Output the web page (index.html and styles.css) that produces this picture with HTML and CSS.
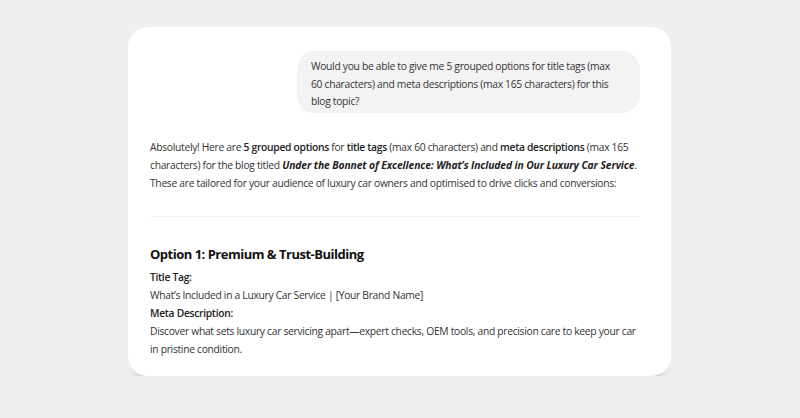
FILE: index.html
```html
<!DOCTYPE html>
<html>
<head>
<meta charset="utf-8">
<link rel="stylesheet" href="styles.css">
</head>
<body>
<div class="card">
  <div class="user-row">
    <div class="bubble">Would you be able to give me 5 grouped options for title tags (max 60 characters) and meta descriptions (max 165 characters) for this blog topic?</div>
  </div>
  <p class="intro">Absolutely! Here are <b>5 grouped options</b> for <b>title tags</b> (max 60 characters) and <b>meta descriptions</b> (max 165 characters) for the blog titled <b class="title-ref"><i>Under the Bonnet of Excellence: What’s Included in Our Luxury Car Service</i></b>. These are tailored for your audience of luxury car owners and optimised to drive clicks and conversions:</p>
  <hr class="divider">
  <h3 class="option">Option 1: Premium &amp; Trust-Building</h3>
  <div class="field">
    <b>Title Tag:</b><br>
    What’s Included in a Luxury Car Service | [Your Brand Name]<br>
    <b>Meta Description:</b><br>
    Discover what sets luxury car servicing apart—expert checks, OEM tools, and precision care to keep your car in pristine condition.
  </div>
</div>
</body>
</html>
```
FILE: styles.css
```css
html {
  margin: 0;
  padding: 0;
  background: #efefef;
}
body {
  margin: 0;
  font-family: "Open Sans", "Noto Sans", sans-serif;
  font-size: 10.3px;
  letter-spacing: -0.3px;
  color: #333;
  padding-top: 27px;
}
.card {
  margin-left: 128px;
  width: 543px;
  height: 349px;
  box-sizing: border-box;
  background: #fff;
  border-radius: 20px;
  padding: 24px 31px 0 22px;
  box-shadow: 0 17px 12px -11px rgba(0, 0, 0, 0.26);
}
.user-row {
  display: flex;
  justify-content: flex-end;
}
.bubble {
  width: 343px;
  box-sizing: border-box;
  background: #f3f3f3;
  border-radius: 18px;
  padding: 7px 22px 2px 14px;
  line-height: 17.5px;
}
.intro {
  margin: 25px 0 0;
  line-height: 18px;
}
.intro b { color: #222; font-weight: 600; }
.intro .title-ref { font-weight: 700; letter-spacing: -0.1px; }
.divider {
  border: 0;
  border-top: 1px solid #f2f2f2;
  margin: 24px 0 0;
}
.option {
  margin: 28px 0 0;
  font-size: 13px;
  font-weight: 700;
  letter-spacing: -0.5px;
  color: #111;
  line-height: 18px;
}
.field {
  margin-top: 5px;
  line-height: 18px;
}
.field b { color: #222; font-weight: 600; }
```
